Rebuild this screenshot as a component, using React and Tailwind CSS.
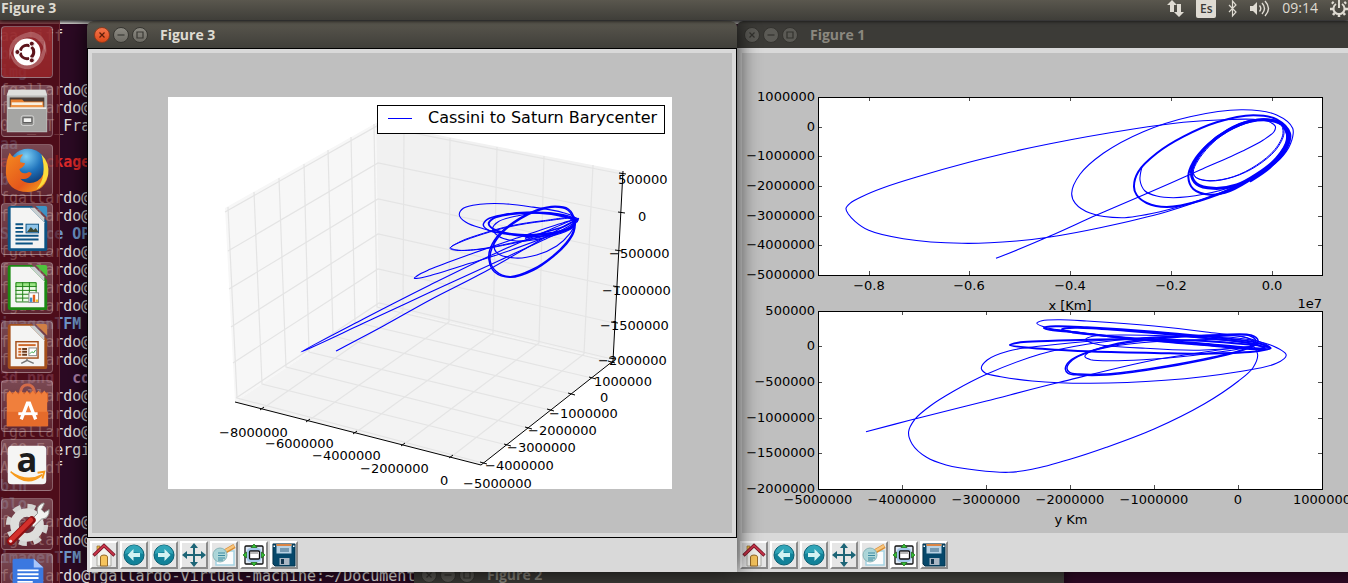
import React from "react";
import clsx from "clsx";

const PROMPT = "fgallardo@fgallardo-virtual-machine:~/Document";

const terminalLines = [
  { text: "aa.tiff" },
  { text: "bin", tone: "blue" },
  { text: "img", tone: "blue" },
  { text: "fgallardo@" },
  { text: "fgallardo@" },
  { text: "001_PT_Fra" },
  { text: "aa", tone: "blue" },
  { text: "aa.package", tone: "red" },
  { text: "b", tone: "blue" },
  { text: "fgallardo@" },
  { text: "fgallardo@" },
  { text: "Science OP", tone: "blue" },
  { text: "fgallardo@" },
  { text: "fgallardo@" },
  { text: "fgallardo@" },
  { text: "fgallardo@" },
  { text: "imagenTFM", tone: "blue" },
  { text: "fgallardo@" },
  { text: "fgallardo@" },
  { text: "3d.png  co", tone: "pink" },
  { text: "fgallardo@" },
  { text: "fgallardo@" },
  { text: "fgallardo@" },
  { text: "ACQ_Energi" },
  { text: "Acq.pdf" },
  { text: "bin", tone: "blue" },
  { text: "blo", tone: "blue" },
  { text: "fgallardo@" },
  { text: "fgallardo@" },
  { text: "imagenTFM", tone: "blue" },
  { text: PROMPT },
];

const tones = {
  blue: "font-bold text-[#6f96c8]",
  red: "font-bold text-[#e02a2a]",
  pink: "font-bold text-[#ad7fa8]",
};

/* ---------- curves ---------- */

const dist = (a, b) => Math.sqrt(Math.hypot(b[0] - a[0], b[1] - a[1])) || 1;

// centripetal spline through points; frame is [originX, originY, scaleX, scaleY]
const curve = (pts, [x0, y0, kx, ky], closed = true) => {
  const p = pts.map(([x, y]) => [x0 + x / kx, y0 + y / ky]);
  const n = p.length;
  const at = (i) => (closed ? p[(i + n) % n] : p[Math.max(0, Math.min(n - 1, i))]);
  let d = `M${p[0][0].toFixed(1)} ${p[0][1].toFixed(1)}`;
  const last = closed ? n : n - 1;
  for (let i = 0; i < last; i++) {
    const a = at(i - 1), b = at(i), c = at(i + 1), e = at(i + 2);
    const t1 = dist(a, b), t2 = dist(b, c), t3 = dist(c, e);
    const nums = [];
    for (const k of [0, 1]) {
      const m1 = t2 * ((b[k] - a[k]) / t1 - (c[k] - a[k]) / (t1 + t2) + (c[k] - b[k]) / t2);
      nums.push(b[k] + m1 / 3);
    }
    for (const k of [0, 1]) {
      const m2 = t2 * ((c[k] - b[k]) / t2 - (e[k] - b[k]) / (t2 + t3) + (e[k] - c[k]) / t3);
      nums.push(c[k] - m2 / 3);
    }
    nums.push(c[0], c[1]);
    d += `C${nums.map((v) => v.toFixed(1)).join(" ")}`;
  }
  return d;
};

const Curves = ({ items, frame }) => (
  <g fill="none" stroke="#0000ff" strokeLinejoin="round">
    {items.map((c, i) => (
      <path key={i} d={curve(c.pts, frame, !c.open)} strokeWidth={c.w || 1.1} />
    ))}
  </g>
);

const xyCurves = [
  // outer orbit and the arrival leg
  {
    open: true,
    pts: [[-162, 520], [0, 453], [140, 390], [280, 330], [450, 255], [580, 197], [640, 165], [672, 140], [676, 124], [655, 109], [610, 103], [520, 104], [400, 112], [250, 132], [0, 176], [-120, 202], [-243, 232], [-400, 276], [-500, 308], [-565, 335], [-600, 355], [-612, 370], [-605, 387], [-585, 409], [-544, 436], [-440, 461], [-264, 475], [-100, 468], [0, 456], [150, 428], [350, 380], [500, 328], [620, 270], [690, 205], [712, 160], [700, 125]],
  },
  { pts: [[65, 325], [90, 268], [160, 205], [280, 140], [420, 95], [580, 74], [680, 90], [728, 130], [722, 175], [690, 222], [600, 285], [450, 345], [330, 380], [215, 398], [120, 384], [76, 355]] },
  { w: 2, pts: [[252, 305], [265, 260], [320, 205], [400, 155], [500, 112], [610, 91], [680, 103], [720, 145], [708, 195], [660, 245], [560, 305], [450, 347], [350, 366], [290, 354], [260, 330]] },
  { open: true, pts: [[276, 245], [270, 285], [285, 318], [320, 333], [370, 338], [460, 328], [560, 300], [640, 255]] },
  { w: 2, pts: [[415, 275], [430, 230], [470, 182], [530, 137], [600, 108], [660, 104], [700, 120], [717, 160], [690, 215], [620, 272], [540, 318], [480, 329], [430, 312]] },
  { w: 3, pts: [[424, 265], [438, 225], [476, 178], [535, 135], [600, 109], [660, 106], [702, 124], [712, 165], [680, 220], [620, 268], [560, 300], [490, 310], [440, 297]] },
  { w: 1, pts: [[430, 262], [445, 225], [500, 163], [570, 122], [640, 105], [690, 115], [699, 145], [675, 193], [620, 240], [550, 275], [480, 287], [440, 278]] },
  { w: 1, pts: [[428, 262], [441, 225], [497, 160], [570, 119], [640, 103], [692, 113], [702, 145], [677, 195], [620, 243], [550, 276], [480, 288], [438, 278]] },
  { w: 2, open: true, pts: [[670, 105], [702, 125], [718, 160], [700, 200], [660, 248], [600, 290]] },
];

const yzCurves = [
  {
    open: true,
    pts: [[335, 410], [447, 376], [643, 318], [830, 262], [1072, 195], [1250, 163], [1330, 150], [1310, 128], [1200, 122], [1050, 128], [900, 148], [780, 178], [643, 238], [560, 288], [500, 332], [460, 373], [444, 410], [453, 447], [490, 487], [540, 510], [620, 526], [700, 532], [760, 523], [857, 493], [950, 457], [1072, 402], [1200, 327], [1288, 258], [1325, 218], [1337, 180], [1325, 150]],
  },
  { pts: [[630, 220], [645, 195], [700, 168], [790, 152], [950, 135], [1150, 124], [1280, 128], [1370, 150], [1410, 180], [1385, 205], [1288, 230], [1100, 256], [900, 265], [760, 258], [680, 245], [640, 234]] },
  { pts: [[772, 85], [785, 77], [830, 74], [900, 78], [1072, 93], [1200, 110], [1320, 132], [1365, 155], [1320, 160], [1200, 150], [1000, 130], [870, 110], [800, 99]] },
  { w: 2, pts: [[790, 98], [820, 94], [900, 97], [1072, 110], [1200, 124], [1330, 142], [1370, 160], [1330, 162], [1200, 150], [1000, 130], [870, 112], [800, 103]] },
  { w: 2, pts: [[836, 103], [870, 98], [1000, 107], [1200, 128], [1330, 148], [1355, 160], [1200, 146], [1000, 128], [860, 111]] },
  { w: 2, pts: [[703, 150], [730, 142], [800, 138], [1000, 133], [1250, 142], [1368, 160], [1340, 168], [1200, 176], [1072, 174], [900, 169], [760, 159]] },
  { w: 1.5, pts: [[845, 222], [857, 197], [900, 172], [980, 148], [1100, 130], [1240, 119], [1320, 120], [1338, 137], [1325, 153], [1288, 170], [1200, 195], [1072, 222], [950, 240], [880, 240], [852, 235]] },
  { w: 1.5, pts: [[849, 220], [863, 195], [908, 170], [980, 145], [1100, 127], [1240, 121], [1318, 123], [1332, 137], [1318, 153], [1288, 168], [1200, 192], [1072, 219], [950, 237], [880, 237], [856, 232]] },
  { pts: [[895, 185], [905, 172], [960, 155], [1072, 140], [1250, 135], [1330, 150], [1200, 177], [1072, 192], [980, 197], [910, 194]] },
  { pts: [[897, 133], [915, 124], [1000, 120], [1200, 130], [1330, 150], [1200, 165], [1050, 160], [920, 146]] },
];

const spaceCurves = [
  { open: true, pts: [[-282, 573], [-140, 498], [0, 420], [150, 343], [300, 258], [400, 200], [447, 175]] },
  { pts: [[-387, 576], [-200, 490], [0, 397], [200, 305], [340, 240], [430, 195], [442, 178], [330, 222], [200, 278], [0, 375], [-200, 477]] },
  { pts: [[-47, 355], [-30, 342], [0, 328], [100, 290], [250, 238], [400, 188], [442, 178], [400, 208], [250, 268], [120, 310], [0, 347], [-35, 355]] },
  { pts: [[88, 165], [100, 145], [150, 133], [220, 131], [300, 140], [400, 158], [437, 175], [420, 202], [330, 222], [240, 222], [160, 206], [108, 187]] },
  { w: 1.5, pts: [[160, 195], [172, 178], [220, 164], [290, 157], [370, 160], [430, 175], [434, 195], [380, 220], [300, 230], [230, 222], [178, 212]] },
  { w: 2, pts: [[176, 192], [190, 175], [240, 163], [310, 158], [380, 165], [434, 182], [420, 205], [350, 222], [270, 224], [200, 212]] },
  { pts: [[188, 205], [205, 185], [260, 168], [330, 158], [420, 175], [430, 200], [340, 234], [260, 243], [205, 228]] },
  { w: 1.5, pts: [[177, 300], [182, 262], [213, 217], [268, 175], [320, 150], [375, 139], [415, 147], [434, 180], [432, 215], [410, 251], [370, 290], [310, 331], [240, 352], [193, 335]] },
  { w: 1.5, pts: [[180, 300], [187, 262], [218, 217], [270, 177], [320, 153], [375, 141], [413, 150], [431, 180], [429, 215], [408, 249], [368, 288], [308, 328], [240, 350], [197, 333]] },
  { w: 1, pts: [[60, 265], [90, 245], [160, 220], [240, 198], [340, 182], [440, 175], [420, 203], [330, 230], [240, 250], [150, 267], [80, 271]] },
  { w: 1, pts: [[62, 263], [90, 247], [160, 222], [240, 200], [340, 184], [445, 177], [420, 205], [330, 232], [240, 252], [150, 268], [80, 270]] },
  { open: true, pts: [[205, 225], [192, 250], [200, 278], [255, 294], [320, 285], [380, 258], [420, 220], [437, 190]] },
  { w: 1.5, open: true, pts: [[285, 235], [350, 215], [400, 200], [442, 178]] },
];

/* ---------- plots ---------- */

const Tick = ({ x, y, anchor = "start", children }) => (
  <text x={x} y={y} textAnchor={anchor}>{children}</text>
);

const Axes = ({ x, y, w, h, xs, ys, yLabels, xLabels, labelGap, children }) => (
  <g>
    <rect x={x} y={y} width={w} height={h} fill="#ffffff" />
    {children}
    <rect x={x + 0.5} y={y + 0.5} width={w} height={h} fill="none" stroke="#000000" />
    <g stroke="#000000" strokeWidth="0.7">
      {xs.map((v) => (
        <path key={v} d={`M${v + 0.5} ${y}v4M${v + 0.5} ${y + h}v-4`} />
      ))}
      {ys.map((v) => (
        <path key={v} d={`M${x} ${v + 0.5}h4M${x + w} ${v + 0.5}h-4`} />
      ))}
    </g>
    {xs.map((v, i) => (
      <Tick key={v} x={v} y={y + h + labelGap} anchor="middle">{xLabels[i]}</Tick>
    ))}
    {ys.map((v, i) => (
      <Tick key={v} x={x - 3} y={v + 4} anchor="end">{yLabels[i]}</Tick>
    ))}
  </g>
);

const PlanePlots = () => (
  <svg viewBox="742 53 640 480" className="block w-full bg-[#bfbfbf] font-['DejaVu_Sans',sans-serif] text-[13px]">
    <Axes
      x={818} y={97} w={504} h={178} labelGap={15}
      xs={[869, 969, 1070, 1171, 1272]}
      ys={[97, 127, 156, 186, 216, 245, 275]}
      xLabels={["−0.8", "−0.6", "−0.4", "−0.2", "0.0"]}
      yLabels={["1000000", "0", "−1000000", "−2000000", "−3000000", "−4000000", "−5000000"]}
    >
      <Curves items={xyCurves} frame={[1050, 85, 3, 3]} />
    </Axes>
    <Tick x={1070} y={310} anchor="middle">x [Km]</Tick>
    <Tick x={1322} y={308} anchor="end">1e7</Tick>
    <Axes
      x={818} y={311} w={504} h={178} labelGap={15}
      xs={[818, 902, 986, 1070, 1154, 1238, 1322]}
      ys={[311, 346, 382, 418, 453, 489]}
      xLabels={["−5000000", "−4000000", "−3000000", "−2000000", "−1000000", "0", "1000000"]}
      yLabels={["500000", "0", "−500000", "−1000000", "−1500000", "−2000000"]}
    >
      <Curves items={yzCurves} frame={[735, 295, 2.558, 3]} />
    </Axes>
    <Tick x={1071} y={524} anchor="middle">y Km</Tick>
  </svg>
);

const gridLines = [
  // y: left wall then floor
  "228,207 237,398 483,463", "254,192 262,384 507,445", "279,178 286,367 528,428", "304,164 309,352 550,410",
  "328,150 333,336 571,394", "351,137 355,322 592,378", "374,124 377,307 611,362",
  // x: right wall then floor
  "404,129 403,311 262,409", "450,138 449,322 308,421", "497,147 493,333 355,433", "544,156 539,343 403,445",
  "593,165 584,354 451,457",
  // z: left wall then right wall
  "225,212 377,126 622,174", "228,251 378,163 621,213", "229,289 378,199 619,251", "231,327 378,234 617,287",
  "233,363 378,269 614,323", "236,398 379,303 612,359",
];

const SpacePlot = () => (
  <svg viewBox="92 53 640 480" className="block w-full bg-[#bfbfbf] font-['DejaVu_Sans',sans-serif] text-[13px]">
    <rect x="168" y="97" width="504" height="392" fill="#ffffff" />
    <polygon points="225,208 376,123 379,306 235,402" fill="#f7f7f7" />
    <polygon points="376,123 623,171 613,361 379,306" fill="#f1f1f1" />
    <polygon points="235,402 379,306 613,361 481,465" fill="#f3f3f3" />
    <g fill="none" stroke="#e4e4e4" strokeWidth="1.200">
      {gridLines.map((p) => <polyline key={p} points={p} />)}
    </g>
    <path
      d="M235 402L481 465L613 361L623 171M264 407l-4 3M310 419l-4 3M357 431l-4 3M405 443l-4 3M453 455l-4 3M480 462l7 2M504 444l7 2M525 427l7 2M547 409l7 2M568 393l7 2M589 377l7 2M608 361l7 2M619 173l7 1M618 212l7 1M615 250l7 1M613 286l7 1M611 322l7 1M609 358l7 1"
      fill="none" stroke="#000000"
    />
    <Curves items={spaceCurves} frame={[430, 160, 3, 3]} />
    <Tick x={219} y={437}>−8000000</Tick>
    <Tick x={265} y={448}>−6000000</Tick>
    <Tick x={312} y={460}>−4000000</Tick>
    <Tick x={360} y={473}>−2000000</Tick>
    <Tick x={440} y={485}>0</Tick>
    <Tick x={463} y={488}>−5000000</Tick>
    <Tick x={485} y={470}>−4000000</Tick>
    <Tick x={507} y={452}>−3000000</Tick>
    <Tick x={528} y={435}>−2000000</Tick>
    <Tick x={549} y={418}>−1000000</Tick>
    <Tick x={600} y={402}>0</Tick>
    <Tick x={594} y={386}>1000000</Tick>
    <Tick x={598} y={365}>−2000000</Tick>
    <Tick x={600} y={330}>−1500000</Tick>
    <Tick x={602} y={295}>−1000000</Tick>
    <Tick x={609} y={258}>−500000</Tick>
    <Tick x={638} y={221}>0</Tick>
    <Tick x={618} y={184}>500000</Tick>
    <rect x="377.5" y="105.5" width="287" height="28" fill="#ffffff" stroke="#000000" />
    <path d="M388 118.5h24" stroke="#0000ff" />
    <text x="428" y="123" className="text-[16px]">Cassini to Saturn Barycenter</text>
  </svg>
);

/* ---------- toolbar icons ---------- */

const HomeIcon = () => (
  <svg viewBox="0 0 24 24" className="size-6">
    <path d="M5 3h3v6H5z" fill="#f0b54a" stroke="#8d6a2c" strokeWidth=".7" />
    <path d="M5 11l7-7 7 7v12H5z" fill="#f2f2ee" stroke="#9a9a94" strokeWidth=".8" />
    <path d="M8.500 23v-9q0-2 3.500-2t3.500 2v9z" fill="#f6c45c" stroke="#93692a" />
    <path d="M1.500 12.500L12 2.500l10.500 10" fill="none" stroke="#6f1424" strokeWidth="3.200" />
    <path d="M2 12L12 2.500l10 9.500" fill="none" stroke="#c8344a" strokeWidth="1.800" />
  </svg>
);

const ArrowIcon = ({ flip }) => (
  <svg viewBox="0 0 24 24" className={clsx("size-6", flip && "-scale-x-100")}>
    <circle cx="12" cy="12" r="10" fill="#128299" stroke="#0b5f72" />
    <path d="M3 11a9 9 0 0 1 18 0q-9-4-18 0z" fill="#3fb3c4" opacity=".7" />
    <path d="M5.500 12l6-6v4h6.500v4h-6.500v4z" fill="#d3f3f2" />
  </svg>
);

const PanIcon = () => (
  <svg viewBox="0 0 24 24" className="size-6">
    <path d="M12 3v18M3 12h18" stroke="#1d6577" strokeWidth="2" />
    <path d="M12 0l4 5H8zM12 24l4-5H8zM0 12l5-4v8zM24 12l-5-4v8z" fill="#1d6577" />
  </svg>
);

const ZoomIcon = () => (
  <svg viewBox="0 0 24 24" className="size-6">
    <path d="M4 8h18v14H4z" fill="#fcfcfc" stroke="#a5d3e4" strokeWidth="1.500" />
    <path d="M13 8.500L22.500 3" stroke="#d98d35" strokeWidth="4.500" />
    <path d="M13 8L22 2.800" stroke="#f8c67c" strokeWidth="2.500" />
    <circle cx="8" cy="12" r="7" fill="#a9d4d6" fillOpacity=".9" stroke="#89b5b9" />
    <path d="M6 10h7M6 12.500h7M6 15h7M6 17h5" stroke="#3b8aa1" />
  </svg>
);

const SubplotsIcon = () => (
  <svg viewBox="0 0 24 24" className="size-6 bg-white">
    <rect x="3" y="3" width="18" height="18" rx="1" fill="#dfe9f4" stroke="#111111" strokeWidth="1.300" />
    <path d="M5 8q0-3 4-3h6q4 0 4 3v8q0 3-4 3H9q-4 0-4-3z" fill="#a5c8ec" />
    <rect x="7.500" y="8" width="10" height="8" rx="1" fill="#ffffff" stroke="#111111" strokeWidth="1.300" />
    <path d="M9 8v3M11 8v3M13 8v3M15 8v3" stroke="#777777" />
    <path d="M12 1l3 3.500H9zM12 23l3-3.500H9zM1 12l3.500-3v6zM23 12l-3.500-3v6z" fill="#35c335" stroke="#10610f" strokeWidth=".7" />
  </svg>
);

const SaveIcon = () => (
  <svg viewBox="0 0 24 24" className="size-6">
    <path d="M1 1h22v22H3l-2-2z" fill="#06486b" stroke="#03324d" />
    <path d="M4.500 1h15v9.500h-15z" fill="#b9d2e4" />
    <path d="M4.500 1h15v2h-15z" fill="#d98444" />
    <path d="M8 6h9M8 8h9" stroke="#31607f" />
    <path d="M7.500 15h10v7h-10z" fill="#aab7c4" />
    <path d="M9 16h3v5H9z" fill="#12364f" />
    <path d="M1.500 2.500h1.500v1.500H1.500zM21 2.500h1.500v1.500H21z" fill="#ffffff" />
  </svg>
);

const tools = [
  { name: "Home", icon: <HomeIcon /> },
  { name: "Back", icon: <ArrowIcon /> },
  { name: "Forward", icon: <ArrowIcon flip /> },
  { name: "Pan", icon: <PanIcon /> },
  { name: "Zoom", icon: <ZoomIcon /> },
  { name: "Subplots", icon: <SubplotsIcon /> },
  { name: "Save", icon: <SaveIcon /> },
];

/* ---------- windows ---------- */

const TitleBar = ({ title, active }) => (
  <header
    className={clsx(
      "flex h-[27px] items-center gap-[3px] rounded-t-md pl-[7px]",
      active ? "bg-linear-to-b from-[#5a574e] to-[#403f3a]" : "bg-[#3c3b37]"
    )}
  >
    {["close", "minimize", "maximize"].map((b) => (
      <button
        key={b}
        aria-label={b}
        className={clsx(
          "grid size-4 place-items-center rounded-full border",
          !active && "border-[#353430] bg-[#5b5a55] text-[#33322e]",
          active && b === "close" && "border-[#8f3a1c] bg-linear-to-b from-[#f4754b] to-[#dd4814] text-[#5c1d08]",
          active && b !== "close" && "border-[#383732] bg-linear-to-b from-[#8c8a82] to-[#6d6b64] text-[#3a3934]"
        )}
      >
        <svg viewBox="0 0 10 10" className="size-[10px]" fill="none" stroke="currentColor" strokeWidth="1.200">
          {b === "close" && <path d="M2.500 2.500l5 5M7.500 2.500l-5 5" />}
          {b === "minimize" && <path d="M1.500 5h7" />}
          {b === "maximize" && <path d="M2 2h6v6H2z" />}
        </svg>
      </button>
    ))}
    <h2 className={clsx("pl-[9px] text-sm font-bold", active ? "text-[#dfdbd2]" : "text-[#8b887f]")}>{title}</h2>
  </header>
);

const FigureWindow = ({ title, active, className, children }) => (
  <section
    className={clsx(
      "absolute w-[650px] rounded-t-md",
      active ? "shadow-[0_0_22px_rgba(0,0,0,0.85)]" : "shadow-[0_0_14px_rgba(0,0,0,0.6)]",
      className
    )}
  >
    <TitleBar title={title} active={active} />
    <div className={clsx("border bg-[#d9d9d9] p-1", active ? "border-black" : "border-[#d9d9d9]")}>{children}</div>
    <div className="flex gap-[2px] bg-[#d9d9d9] p-[3px]">
      {tools.map((t) => (
        <button
          key={t.name}
          aria-label={t.name}
          className="grid size-7 place-items-center border-2 border-t-white border-r-[#8a8a8a] border-b-[#8a8a8a] border-l-white bg-[#e6e6e6]"
        >
          {t.icon}
        </button>
      ))}
    </div>
  </section>
);

const Terminal = () => (
  <div className="absolute inset-0 bg-[#2c0a24]">
    <div className="h-1 bg-linear-to-b from-[#8a898b] to-[#dcdad7]" />
    <pre className="pt-[3px] font-['DejaVu_Sans_Mono',monospace] text-[15px] leading-[18px] text-[#e6e4e2]">
      {terminalLines.map((l, i) => (
        <div key={i} className={tones[l.tone]}>{l.text}</div>
      ))}
    </pre>
  </div>
);

/* ---------- launcher ---------- */

const UbuntuIcon = () => (
  <svg viewBox="0 0 52 52" className="size-full">
    <rect width="52" height="52" rx="4" fill="#9a2226" fillOpacity=".8" />
    <path d="M8 34Q3 10 30 5q18 2 16 24Q40 6 22 12 10 18 8 34z" fill="#ffffff" opacity=".22" />
    <path d="M44 14q6 24-16 30Q10 44 8 24q6 16 20 16 14-4 16-26z" fill="#ffffff" opacity=".25" />
    <circle cx="26" cy="26" r="14" fill="#ffffff" />
    <circle cx="26" cy="26" r="7" fill="none" stroke="#5c141b" strokeWidth="3.200" strokeDasharray="12.600 2" strokeDashoffset="6" />
    <g fill="#5c141b" stroke="#ffffff" strokeWidth="1">
      <circle cx="16" cy="26" r="2.600" />
      <circle cx="31" cy="17.300" r="2.600" />
      <circle cx="31" cy="34.700" r="2.600" />
    </g>
  </svg>
);

const FilesIcon = () => (
  <svg viewBox="0 0 52 52" className="size-full">
    <path d="M7 4h38l2 6v38H5V10z" fill="#b9b9b7" />
    <path d="M7 4h38l2 6H5z" fill="#dededc" />
    <path d="M8 12h36v12H8z" fill="#4a3a34" />
    <path d="M9 14l12 0 2 2h20v8H9z" fill="#e9802f" />
    <path d="M10 17h32v3H10z" fill="#f7efdf" />
    <path d="M9 20h34v4H9z" fill="#ef9546" />
    <path d="M6 23h40v24H6z" fill="#a5a5a3" />
    <path d="M6 22h40v2H6z" fill="#ecece9" />
    <rect x="20" y="31" width="13" height="10" rx="2" fill="#8c8c8a" stroke="#d9d9d7" />
    <path d="M22 33h9v5h-9z" fill="#f4f4f2" stroke="#545454" strokeWidth="1" />
  </svg>
);

const FirefoxIcon = () => (
  <svg viewBox="0 0 52 52" className="size-full">
    <defs>
      <radialGradient id="globe" cx=".45" cy=".2" r=".8">
        <stop offset="0" stopColor="#7fd0f5" />
        <stop offset=".5" stopColor="#2074bd" />
        <stop offset="1" stopColor="#0b2e66" />
      </radialGradient>
      <linearGradient id="fox" x1="0" y1="0" x2="1" y2="1">
        <stop offset="0" stopColor="#f58a20" />
        <stop offset=".6" stopColor="#e4571b" />
        <stop offset="1" stopColor="#f7b21e" />
      </linearGradient>
    </defs>
    <circle cx="27" cy="24" r="20" fill="url(#globe)" />
    <path d="M8 8q2 4 5 5 5-4 9-3-4 4-3 8l5 1q-1 4-6 6 2 6 8 4 3-2 5 1-4 7-12 5 6 6 14 4 10-3 11-14 0-5-2-9 7 6 6 14-2 18-21 19Q5 48 4 29 4 16 8 8z" fill="url(#fox)" />
    <path d="M41 10q9 9 7 21-3 11-12 15 6-7 7-16 1-11-2-20z" fill="#fbdc3c" />
  </svg>
);

const DocIcon = ({ color, light, children }) => (
  <svg viewBox="0 0 52 52" className="size-full">
    <path d="M9 2h22l16 16v29q0 2-2 2H9q-3 0-3-3V5q0-3 3-3z" fill={color} />
    <path d="M9 4h20l15 15v27H9z" fill="#f4f4f3" />
    <path d="M29 4h5l10 10v5z" fill="#c9cfd0" />
    <path d="M35 2h10q2 0 2 2v10z" fill={light} />
    {children}
  </svg>
);

const WriterIcon = () => (
  <DocIcon color="#0d5484" light="#3d92c4">
    <path d="M14 21h8M14 25h8M14 29h8M14 33h24M14 37h24M14 41h18" stroke="#0d5484" strokeWidth="2" />
    <rect x="25" y="21" width="13" height="9" fill="#8fc5ea" stroke="#0d5484" />
    <path d="M26 29l4-5 3 3 2-2 3 4z" fill="#3c4a35" />
  </DocIcon>
);

const CalcIcon = () => (
  <DocIcon color="#1c8a13" light="#4fc33c">
    <rect x="14" y="20" width="22" height="20" fill="#ecfbe6" />
    <path d="M14 20h22v4H14z" fill="#9be584" />
    <path d="M14.500 20.500h21v20h-21zM14 24.500h22M14 28.500h22M14 32.500h22M14 36.500h22M21.500 20v20M28.500 20v20" fill="none" stroke="#1c7d14" />
    <rect x="28" y="31" width="10" height="10" fill="#ffffff" stroke="#8b8b8b" />
    <path d="M29 36h2.500v4.500H29z" fill="#3a8fd0" />
    <path d="M32 33h2.500v7.500H32z" fill="#e0601c" />
    <path d="M35 38h2.500v2.500H35z" fill="#e9c329" />
  </DocIcon>
);

const ImpressIcon = () => (
  <DocIcon color="#a5501c" light="#d07f45">
    <rect x="14.500" y="20.500" width="23" height="17" fill="#fdf1e8" stroke="#a5501c" strokeWidth="1.500" />
    <path d="M17 24h18" stroke="#cf6a2c" strokeWidth="2" />
    <path d="M17 28h3M17 31h3M17 34h3" stroke="#cf6a2c" strokeWidth="2" />
    <path d="M21 28h5M21 31h5M21 34h5" stroke="#6b3a1c" strokeWidth="2" />
    <rect x="28" y="27" width="8" height="8" fill="#ffffff" stroke="#888888" />
    <path d="M29 33l2-2 2 1 2-3" fill="none" stroke="#3aa648" />
    <path d="M26 38v2l-6 3M26 40l7 3" fill="none" stroke="#777777" strokeWidth="1.500" />
  </DocIcon>
);

const SoftwareIcon = () => (
  <svg viewBox="0 0 52 52" className="size-full">
    <path d="M19 15q0-11 7.500-11T34 15" fill="none" stroke="#d26b49" strokeWidth="3" />
    <path d="M5 12h43v10H5z" fill="#d2602b" />
    <path d="M5 14l3-4 3 4 3-4 3 4 3-4 3 4 3-4 3 4 3-4 3 4 3-4 3 4 3-4 3 4v33H5z" fill="#f07f3c" />
    <path d="M5 32h43v15H5z" fill="#e56b2b" />
    <path d="M20 40l6.500-17h2L35 40" fill="none" stroke="#ffffff" strokeWidth="3.500" />
    <path d="M17 34h20" stroke="#ffffff" strokeWidth="3" />
  </svg>
);

const AmazonIcon = () => (
  <svg viewBox="0 0 52 52" className="size-full">
    <rect x="6" y="6" width="40" height="40" rx="4" fill="#f5f5f4" />
    <text x="26" y="33" textAnchor="middle" className="fill-[#1c1c1c] font-['Open_Sans',sans-serif] text-[36px] font-bold">a</text>
    <path d="M9 33q17 12 33 3-16 14-33-3z" fill="#f79a1c" stroke="#f79a1c" strokeWidth="1.500" />
    <path d="M37 34l7-1-2 7" fill="none" stroke="#f79a1c" strokeWidth="2" />
  </svg>
);

const SettingsIcon = () => (
  <svg viewBox="0 0 52 52" className="size-full">
    <circle cx="26" cy="27" r="19" fill="none" stroke="#d4d4d2" strokeWidth="6" strokeDasharray="8 6.900" />
    <circle cx="26" cy="27" r="13" fill="none" stroke="#dededc" strokeWidth="9" />
    <path d="M28 24l9-9q-2-8 6-11l1 1-3 6 3 3 5-3q1 9-8 10l-8 8z" fill="#f2f2f0" stroke="#8f8f8d" />
    <path d="M9 44l22-22" stroke="#8e0f12" strokeWidth="8" strokeLinecap="round" />
    <path d="M9 43l21-21" stroke="#d3302c" strokeWidth="5" strokeLinecap="round" />
    <circle cx="9" cy="44" r="1.500" fill="#f5dada" />
  </svg>
);

const PageIcon = () => (
  <svg viewBox="0 0 52 52" className="size-full">
    <path d="M13 5h20l10 9v38H11V7q0-2 2-2z" fill="#3b78e0" />
    <path d="M33 5l10 9H33z" fill="#a9c6fa" />
    <path d="M16 17h22M16 21h22M16 25h22M16 29h16" stroke="#ffffff" strokeWidth="2" />
  </svg>
);

const launcherItems = [
  { name: "Search", icon: <UbuntuIcon /> },
  { name: "Files", icon: <FilesIcon /> },
  { name: "Firefox", icon: <FirefoxIcon /> },
  { name: "Writer", icon: <WriterIcon /> },
  { name: "Calc", icon: <CalcIcon /> },
  { name: "Impress", icon: <ImpressIcon /> },
  { name: "Software", icon: <SoftwareIcon /> },
  { name: "Amazon", icon: <AmazonIcon /> },
  { name: "Settings", icon: <SettingsIcon /> },
  { name: "Documents", icon: <PageIcon /> },
];

const Launcher = () => (
  <nav className="absolute inset-y-0 left-0 flex w-[60px] flex-col gap-[7px] overflow-hidden border-r border-[#7a3a42]/70 bg-[#5a0f17]/75 pt-[6px] pl-px">
    {launcherItems.map((item) => (
      <button
        key={item.name}
        aria-label={item.name}
        className="size-[52px] shrink-0 rounded-[4px] border border-white/25 bg-linear-to-b from-white/25 to-white/10 last:-mt-1"
      >
        {item.icon}
      </button>
    ))}
  </nav>
);

const TopPanel = () => (
  <header className="relative z-10 flex h-5 items-start gap-3 overflow-hidden bg-linear-to-b from-[#5a574e] to-[#3f3e39] pl-px text-[#dfdbd2] shadow-[0_1px_4px_rgba(0,0,0,0.8)]">
    <h1 className="flex-1 text-sm leading-4 font-bold">Figure 3</h1>
    <svg viewBox="0 0 17 18" className="h-[18px] w-[17px]" fill="currentColor">
      <path d="M5 0l5 5H7v7H3V5H0zM12 17l-5-5h3V4h4v8h3z" />
    </svg>
    <span className="h-[18px] w-5 rounded-b-xs bg-[#dfdbd2] text-center text-xs leading-[17px] font-semibold text-[#3c3b37]">Es</span>
    <svg viewBox="0 0 10 18" className="h-[18px] w-[10px]" fill="none" stroke="currentColor" strokeWidth="1.200">
      <path d="M1 5l7 7-3.500 4V1L8 5l-7 7" />
    </svg>
    <svg viewBox="0 0 20 18" className="h-[18px] w-5" fill="none" stroke="currentColor" strokeWidth="1.400">
      <path d="M0 6h3l4-4v13l-4-4H0z" fill="currentColor" stroke="none" />
      <path d="M9.500 5.500q2.500 3 0 6M12 3q5 5.500 0 11M15 1q7 7.500 0 15" />
    </svg>
    <time className="text-sm leading-4">09:14</time>
    <svg viewBox="0 0 18 18" className="h-[18px] w-[18px]" fill="none" stroke="currentColor">
      <path d="M6 4a5.500 5.500 0 1 0 6 0" strokeWidth="2" />
      <path d="M9 0v8" strokeWidth="2" />
      <path d="M3.500 3.500L2 2M14.500 3.500L16 2M3 9H0M15 9h3M4.500 13L3 15M13.500 13l1.500 2M9 14v3" strokeWidth="2.500" />
    </svg>
  </header>
);

export default function App() {
  return (
    <div className="flex h-screen flex-col overflow-hidden font-['Open_Sans',sans-serif]">
      <TopPanel />
      <main className="relative flex-1 overflow-hidden">
        <Terminal />
        <FigureWindow title="Figure 2" className="top-[541px] left-[414px]" />
        <FigureWindow title="Figure 1" className="top-px left-[737px]">
          <PlanePlots />
        </FigureWindow>
        <FigureWindow title="Figure 3" active className="top-px left-[87px]">
          <SpacePlot />
        </FigureWindow>
        <Launcher />
      </main>
    </div>
  );
}
